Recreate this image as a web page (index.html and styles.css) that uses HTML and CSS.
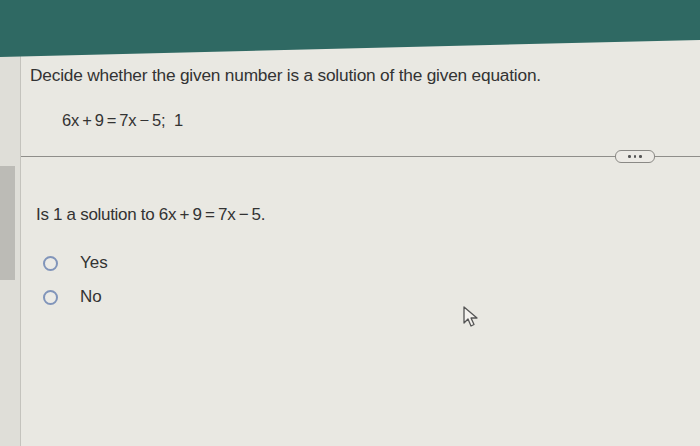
FILE: index.html
```html
<!DOCTYPE html>
<html>
<head>
<meta charset="utf-8">
<link rel="stylesheet" href="styles.css">
</head>
<body>
<div class="header"></div>
<div class="main">
  <div class="side"><div class="side-thumb"></div></div>
  <div class="content">
    <p class="title">Decide whether the given number is a solution of the given equation.</p>
    <p class="eq">6x&#8201;+&#8201;9&#8201;=&#8201;7x&#8201;−&#8201;5; &nbsp;1</p>
    <div class="divider">
      <span class="line"></span>
      <span class="more"><i></i><i></i><i></i></span>
      <span class="line end"></span>
    </div>
    <p class="question">Is 1 a solution to <span class="m">6x&#8201;+&#8201;9&#8201;=&#8201;7x&#8201;−&#8201;5.</span></p>
    <div class="opts">
      <label class="opt"><span class="radio"></span><span>Yes</span></label>
      <label class="opt"><span class="radio"></span><span>No</span></label>
    </div>
    <svg class="cursor" width="18" height="24" viewBox="0 0 18 24"><path d="M2 2 L2 18 L6 14 L9 21 L12 19.5 L9 13 L15 13 Z" fill="#f4f2ee" stroke="#555" stroke-width="1.3" stroke-linejoin="round"/></svg>
  </div>
</div>
</body>
</html>
```
FILE: styles.css
```css
html, body { margin: 0; padding: 0; }
body {
  width: 700px; height: 446px; overflow: hidden;
  background: #e9e8e2;
  font-family: "Liberation Sans", Arial, sans-serif;
  color: #333;
}
.header {
  height: 57px;
  background: #2f6963;
  clip-path: polygon(0 0, 100% 0, 100% 70%, 0 100%);
  margin-bottom: -17px;
}
.main { display: flex; height: 406px; }
.side {
  width: 20px; flex: none;
  background: #dfded8;
  border-right: 1px solid #c4c3bd;
  padding-top: 126px;
}
.side-thumb { width: 15px; height: 114px; background: #bcbbb6; }
.content { flex: 1; position: relative; padding-top: 25px; }
.title { margin: 0 0 0 9px; font-size: 17.3px; letter-spacing: -0.2px; }
.eq { margin: 25px 0 0 41px; font-size: 16.5px; letter-spacing: -0.2px; }
.divider { display: flex; align-items: center; margin-top: 20px; }
.line { flex: 1; height: 1px; background: #8f8e8a; }
.line.end { flex: none; width: 45px; }
.more {
  width: 38px; height: 11px; border: 1px solid #8a8985; border-radius: 6px;
  display: flex; justify-content: center; align-items: center; gap: 3px;
  background: #eceae5;
}
.more i { width: 2.5px; height: 2.5px; border-radius: 50%; background: #555; }
.question { margin: 42px 0 0 15px; font-size: 17px; letter-spacing: -0.3px; }
.m { letter-spacing: -0.2px; }
.opts { display: flex; flex-direction: column; gap: 14px; margin: 28px 0 0 22px; }
.opt { display: flex; align-items: center; gap: 22px; font-size: 17px; }
.radio {
  width: 15px; height: 15px; border: 2px solid #8195ba; border-radius: 50%;
  box-sizing: border-box; background: #ecebe6;
}
.cursor { position: absolute; left: 441px; top: 265px; }
```
